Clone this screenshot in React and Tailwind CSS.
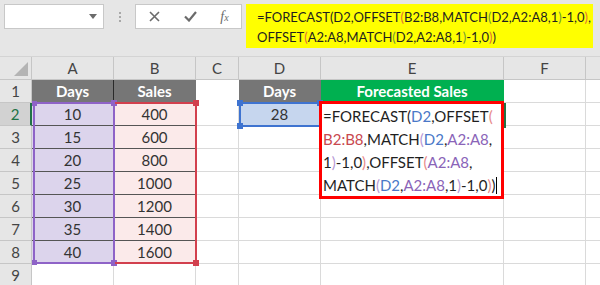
import React from "react";

const W = { rh: 32, A: 82, B: 82, C: 43, D: 82, E: 183, F: 82 };

const K = "#1f1f1f";
const OR = "#e2703a";
const GR = "#6f9b3a";
const BL = "#4a78c8";
const RD = "#c9484f";
const PU = "#8a64b8";
const LP = "#b79ad6";
const PK = "#e88a8a";

function Seg({ parts }) {
  return (
    <>
      {parts.map(([t, c], i) => (
        <span key={i} style={{ color: c }}>
          {t}
        </span>
      ))}
    </>
  );
}

function Cell({ w, className = "", children }) {
  return (
    <div
      className={`shrink-0 h-full flex items-center justify-center border-r border-b ${className}`}
      style={{ width: w }}
    >
      {children}
    </div>
  );
}

const data = [
  [10, 400],
  [15, 600],
  [20, 800],
  [25, 1000],
  [30, 1200],
  [35, 1400],
  [40, 1600],
];

export default function App() {
  const font = { fontFamily: "Lato, 'Open Sans', sans-serif" };
  return (
    <div className="w-[600px] h-[285px] overflow-hidden bg-white relative" style={font}>
      {/* formula bar area */}
      <div className="h-[57px] bg-[#e6e6e6] flex items-start pt-[4px] pl-[4px] border-b border-[#d4d4d4]">
        <div className="w-[100px] h-[25px] bg-white border border-[#c8c8c8] flex items-center justify-end pr-[6px]">
          <svg width="8" height="5" viewBox="0 0 8 5">
            <path d="M0 0 L8 0 L4 5 Z" fill="#6b6b6b" />
          </svg>
        </div>
        <div className="w-[31px] h-[25px] flex flex-col items-center justify-center gap-[2px]">
          <div className="w-[2px] h-[2px] bg-[#a8a8a8]" />
          <div className="w-[2px] h-[2px] bg-[#a8a8a8]" />
          <div className="w-[2px] h-[2px] bg-[#a8a8a8]" />
        </div>
        <div className="w-[107px] h-[25px] bg-white border border-[#c8c8c8] flex items-center">
          <div className="w-[36px] flex justify-center">
            <svg width="11" height="11" viewBox="0 0 11 11">
              <path d="M1 1 L10 10 M10 1 L1 10" stroke="#6b6b6b" strokeWidth="1.6" />
            </svg>
          </div>
          <div className="w-[36px] flex justify-center">
            <svg width="13" height="11" viewBox="0 0 13 11">
              <path d="M1 5.5 L5 9.5 L12 1" stroke="#6b6b6b" strokeWidth="2.2" fill="none" />
            </svg>
          </div>
          <div className="w-[33px] flex justify-center">
            <span
              className="text-[14px] italic text-[#6b6b6b]"
              style={{ fontFamily: "'Liberation Serif', serif" }}
            >
              f<span className="text-[10px]">x</span>
            </span>
          </div>
        </div>
        <div className="ml-[4px] w-[347px] h-[44px] bg-[#ffff00] pl-[11px] pt-[3px] text-[13px] leading-[20px] text-[#1f1f1f] whitespace-nowrap">
          <div>
            <Seg
              parts={[
                ["=FORECAST(D2,OFFSET", K],
                ["(", OR],
                ["B2:B8,MATCH", K],
                ["(", GR],
                ["D2,A2:A8,1", K],
                [")", GR],
                ["-1,0", K],
                [")", OR],
                [",", K],
              ]}
            />
          </div>
          <div>
            <Seg
              parts={[
                ["OFFSET", K],
                ["(", OR],
                ["A2:A8,MATCH", K],
                ["(", GR],
                ["D2,A2:A8,1", K],
                [")", GR],
                ["-1,0", K],
                [")", OR],
                [")", K],
              ]}
            />
          </div>
        </div>
      </div>

      {/* column headers */}
      <div className="h-[23px] flex bg-[#e6e6e6] text-[15px] text-[#444]">
        <div
          className="shrink-0 h-full border-r border-b border-[#c6c6c6] relative"
          style={{ width: W.rh }}
        >
          <svg className="absolute right-[3px] bottom-[3px]" width="14" height="14" viewBox="0 0 14 14">
            <path d="M14 0 L14 14 L0 14 Z" fill="#b4b4b4" />
          </svg>
        </div>
        {["A", "B", "C", "D", "E", "F"].map((c) => (
          <Cell key={c} w={W[c]} className="border-[#c6c6c6]">
            {c}
          </Cell>
        ))}
        <div className="flex-1 h-full border-b border-[#c6c6c6]" />
      </div>

      {/* row 1 */}
      <div className="h-[23px] flex text-[15px]">
        <Cell w={W.rh} className="bg-[#e6e6e6] border-[#c6c6c6] text-[#444]">1</Cell>
        <Cell w={W.A} className="bg-[#767676] border-r-[#2a2a2a] border-b-[#767676] text-white font-bold">Days</Cell>
        <Cell w={W.B} className="bg-[#767676] border-[#767676] text-white font-bold">Sales</Cell>
        <Cell w={W.C} className="border-[#ffffff]" />
        <Cell w={W.D} className="bg-[#767676] border-[#767676] text-white font-bold">Days</Cell>
        <Cell w={W.E} className="bg-[#00b050] border-[#00b050] text-white font-bold">Forecasted Sales</Cell>
        <Cell w={W.F} className="border-[#dadada]" />
        <div className="flex-1 h-full border-b border-[#dadada]" />
      </div>

      {/* data rows */}
      {data.map(([d, s], i) => {
        const r = i + 2;
        const active = r === 2;
        return (
          <div key={r} className="h-[23px] flex text-[15px] text-[#333]">
            <Cell
              w={W.rh}
              className={
                active
                  ? "bg-[#d2d2d2] border-b-[#c6c6c6] border-r-2 border-r-[#217346] text-[#217346]"
                  : "bg-[#e6e6e6] border-[#c6c6c6] text-[#444]"
              }
            >
              {r}
            </Cell>
            <Cell w={W.A} className="bg-[#dcd4ec] border-r-[#555] border-b-[#555]">{d}</Cell>
            <Cell w={W.B} className="bg-[#fbeaea] border-r-[#555] border-b-[#555]">{s}</Cell>
            <Cell w={W.C} className="border-[#dadada]" />
            <Cell w={W.D} className={active ? "bg-[#c6d6ee] border-[#c6d6ee]" : "border-[#dadada]"}>
              {active ? "28" : ""}
            </Cell>
            <Cell w={W.E} className="border-[#dadada]" />
            <Cell w={W.F} className="border-[#dadada]" />
            <div className="flex-1 h-full border-b border-[#dadada]" />
          </div>
        );
      })}

      {/* row 9 */}
      <div className="h-[23px] flex text-[15px]">
        <Cell w={W.rh} className="bg-[#e6e6e6] border-[#c6c6c6] text-[#444]">9</Cell>
        <Cell w={W.A} className="border-[#dadada]" />
        <Cell w={W.B} className="border-[#dadada]" />
        <Cell w={W.C} className="border-[#dadada]" />
        <Cell w={W.D} className="border-[#dadada]" />
        <Cell w={W.E} className="border-[#dadada]" />
        <Cell w={W.F} className="border-[#dadada]" />
        <div className="flex-1 h-full border-b border-[#dadada]" />
      </div>

      {/* selection outlines */}
      <div className="absolute left-[33px] top-[102px] w-[82px] h-[162px] border-2 border-[#8e63c7] pointer-events-none">
        <div className="absolute -left-[3px] -top-[3px] w-[5px] h-[5px] bg-[#8e63c7]" />
        <div className="absolute -right-[4px] -top-[4px] w-[6px] h-[6px] bg-[#8e63c7]" />
        <div className="absolute -left-[3px] -bottom-[3px] w-[5px] h-[5px] bg-[#8e63c7]" />
        <div className="absolute -right-[4px] -bottom-[4px] w-[6px] h-[6px] bg-[#8e63c7]" />
      </div>
      <div className="absolute left-[115px] top-[102px] w-[82px] h-[162px] border-2 border-l-0 border-[#d2404e] pointer-events-none">
        <div className="absolute -right-[4px] -top-[4px] w-[6px] h-[6px] bg-[#d2404e]" />
        <div className="absolute -right-[4px] -bottom-[4px] w-[6px] h-[6px] bg-[#d2404e]" />
      </div>
      <div className="absolute left-[239px] top-[102px] w-[82px] h-[25px] border-2 border-[#3e73d0] pointer-events-none">
        <div className="absolute -left-[4px] -top-[4px] w-[6px] h-[6px] bg-[#3e73d0]" />
        <div className="absolute -right-[4px] -top-[4px] w-[6px] h-[6px] bg-[#3e73d0]" />
        <div className="absolute -left-[4px] -bottom-[4px] w-[6px] h-[6px] bg-[#3e73d0]" />
      </div>

      {/* active cell green marker */}
      <div className="absolute left-[503px] top-[103px] w-[3px] h-[25px] bg-[#217346]" />

      {/* in-cell editor */}
      <div className="absolute left-[319px] top-[101px] w-[185px] h-[98px] bg-white border-[3px] border-[#ff0000] pl-[1px] pt-[1px] text-[15px] leading-[23px] text-[#1f1f1f] whitespace-nowrap overflow-hidden">
        <div>
          <Seg parts={[["=FORECAST(", K], ["D2", BL], [",OFFSET", K], ["(", PK]]} />
        </div>
        <div>
          <Seg
            parts={[
              ["B2:B8", RD],
              [",MATCH", K],
              ["(", LP],
              ["D2", BL],
              [",", K],
              ["A2:A8", PU],
              [",", K],
            ]}
          />
        </div>
        <div>
          <Seg
            parts={[
              ["1", K],
              [")", LP],
              ["-1,0", K],
              [")", PK],
              [",OFFSET", K],
              ["(", PK],
              ["A2:A8", PU],
              [",", K],
            ]}
          />
        </div>
        <div className="flex items-center">
          <Seg
            parts={[
              ["MATCH", K],
              ["(", LP],
              ["D2", BL],
              [",", K],
              ["A2:A8", PU],
              [",1", K],
              [")", LP],
              ["-1,0", K],
              [")", PK],
              [")", K],
            ]}
          />
          <span className="inline-block w-[1px] h-[17px] bg-black ml-[1px]" />
        </div>
      </div>
    </div>
  );
}
